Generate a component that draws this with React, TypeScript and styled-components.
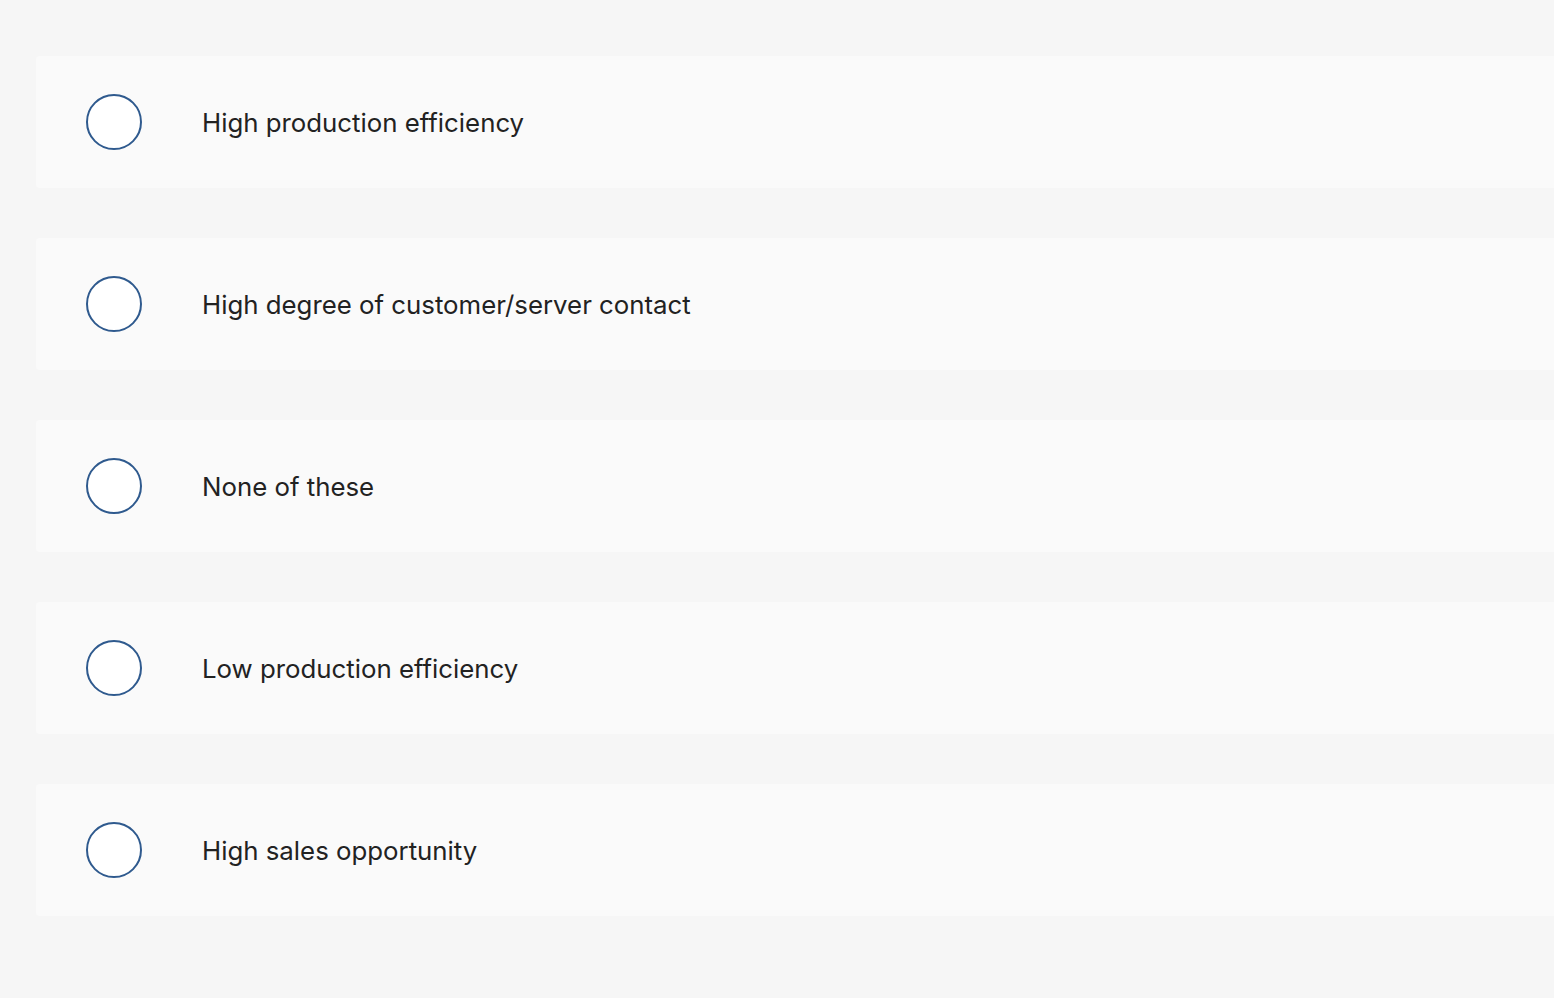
import React from 'react'
import styled, { createGlobalStyle } from 'styled-components'

const GlobalStyle = createGlobalStyle`
  html, body {
    margin: 0;
    padding: 0;
    background: #f6f6f6;
    overflow: hidden;
  }
  body {
    font-family: Inter, 'Open Sans', sans-serif;
  }
`

const options = [
  'High production efficiency',
  'High degree of customer/server contact',
  'None of these',
  'Low production efficiency',
  'High sales opportunity',
]

export default function App() {
  return (
    <>
      <GlobalStyle />
      <Page>
        <OptionList>
          {options.map((label) => (
            <OptionRow key={label}>
              <Radio />
              <Label>{label}</Label>
            </OptionRow>
          ))}
        </OptionList>
      </Page>
    </>
  )
}

const Page = styled.div`
  min-height: 998px;
  padding: 56px 0 0 36px;
  box-sizing: border-box;
`

const OptionList = styled.div`
  display: flex;
  flex-direction: column;
  gap: 50px;
  margin-right: -20px;
`

const OptionRow = styled.label`
  display: flex;
  align-items: center;
  gap: 60px;
  height: 132px;
  padding-left: 50px;
  box-sizing: border-box;
  background: #fafafa;
  border-radius: 4px;
  cursor: pointer;
`

const Radio = styled.span`
  flex: none;
  width: 56px;
  height: 56px;
  box-sizing: border-box;
  border: 2px solid #2f5a8e;
  border-radius: 50%;
  background: #fff;
`

const Label = styled.span`
  font-size: 25.8px;
  color: #222;
`
